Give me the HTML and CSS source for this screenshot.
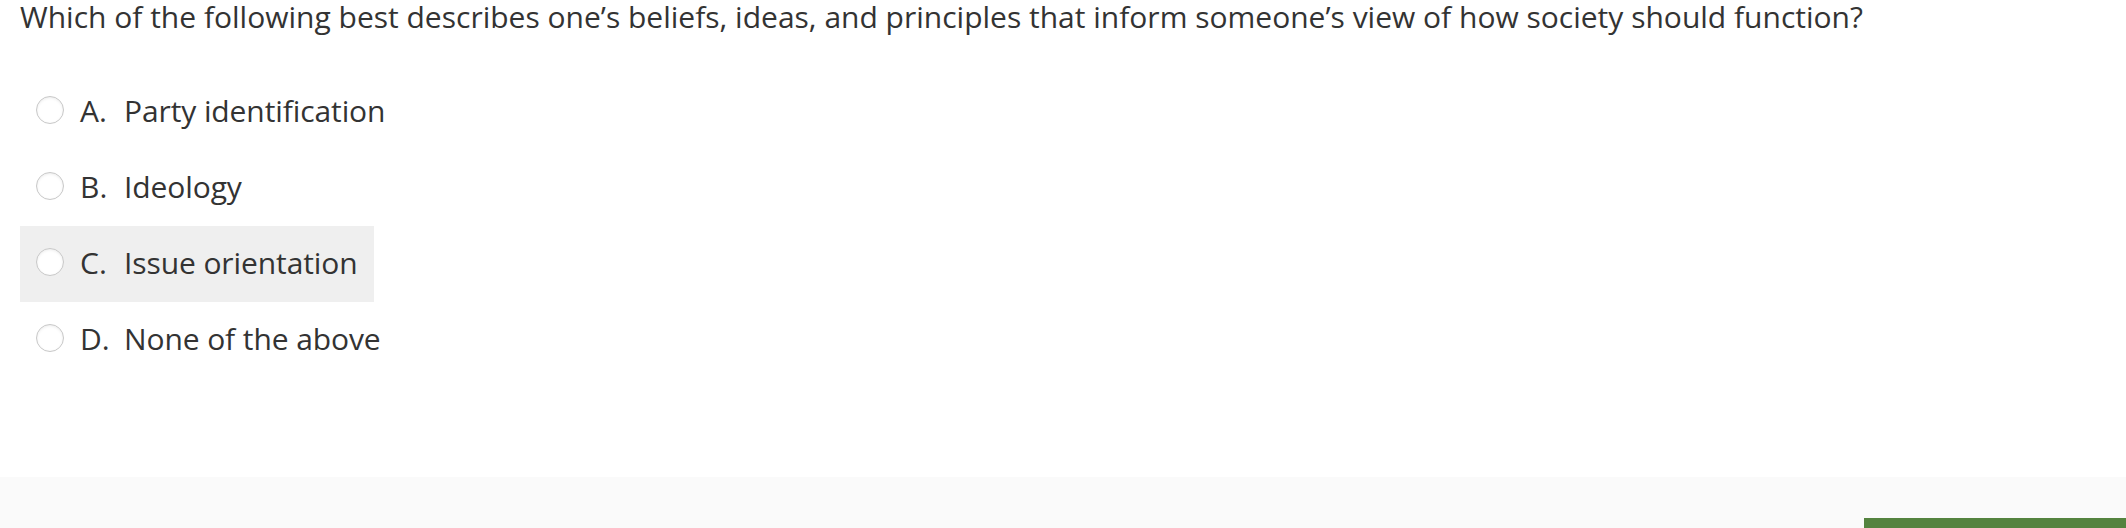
FILE: index.html
```html
<!DOCTYPE html>
<html lang="en">
<head>
<meta charset="utf-8">
<title>Question</title>
<link rel="stylesheet" href="styles.css">
</head>
<body>
<div class="page">
  <main class="question">
    <p class="prompt">Which of the following best describes one’s beliefs, ideas, and principles that inform someone’s view of how society should function?</p>
    <ul class="choices">
      <li class="choice"><span class="radio"></span><span class="letter">A.</span><span class="text">Party identification</span></li>
      <li class="choice"><span class="radio"></span><span class="letter">B.</span><span class="text">Ideology</span></li>
      <li class="choice is-hover"><span class="radio"></span><span class="letter">C.</span><span class="text">Issue orientation</span></li>
      <li class="choice"><span class="radio"></span><span class="letter">D.</span><span class="text">None of the above</span></li>
    </ul>
  </main>
  <footer class="footer">
    <span class="next-btn"></span>
  </footer>
</div>
</body>
</html>
```

FILE: styles.css
```css
html, body {
  margin: 0;
  padding: 0;
  background: #ffffff;
}

.page {
  height: 528px;
  display: flex;
  flex-direction: column;
  font-family: "Open Sans", "Liberation Sans", sans-serif;
  color: #333333;
}

.question {
  flex: 1;
}

.prompt {
  margin: 0;
  padding-left: 20px;
  font-size: 30px;
  line-height: 34px;
  white-space: nowrap;
}

.choices {
  list-style: none;
  margin: 40px 0 0 0;
  padding: 0 0 0 20px;
  display: flex;
  flex-direction: column;
  align-items: flex-start;
}

.choice {
  box-sizing: border-box;
  height: 76px;
  display: flex;
  align-items: center;
  padding: 0 16px 4px 16px;
  font-size: 30px;
}

.choice.is-hover {
  background: #efefef;
}

.radio {
  width: 26px;
  height: 26px;
  border-radius: 50%;
  border: 1px solid #c8c8c8;
  background: #ffffff;
  box-shadow: inset 0 1px 3px rgba(0, 0, 0, 0.08);
  margin-right: 16px;
  flex: none;
}

.letter {
  width: 44px;
  flex: none;
}

.text {
  letter-spacing: -0.1px;
}

.footer {
  height: 51px;
  background: #fafafa;
  display: flex;
  justify-content: flex-end;
  align-items: flex-end;
}

.next-btn {
  width: 262px;
  height: 10px;
  background: #54833f;
}
```
